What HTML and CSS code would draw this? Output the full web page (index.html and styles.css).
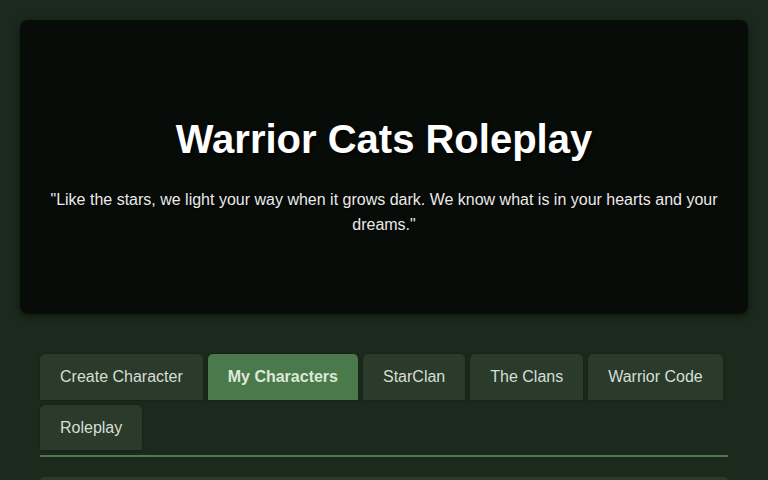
FILE: index.html
```html
<!DOCTYPE html>
<html lang="en">
<head>
<meta charset="utf-8">
<title>Warrior Cats Roleplay</title>
<link rel="stylesheet" href="styles.css">
</head>
<body>
<header class="hero">
  <h1 class="hero-title">Warrior Cats Roleplay</h1>
  <p class="hero-quote">"Like the stars, we light your way when it grows dark. We know what is in your hearts and your dreams."</p>
</header>
<main class="main">
  <nav class="tabs">
    <button class="tab">Create Character</button>
    <button class="tab tab-active">My Characters</button>
    <button class="tab">StarClan</button>
    <button class="tab">The Clans</button>
    <button class="tab">Warrior Code</button>
    <button class="tab">Roleplay</button>
  </nav>
  <section class="panel"></section>
</main>
</body>
</html>
```
FILE: styles.css
```css
html, body {
  margin: 0;
  padding: 0;
}
body {
  background: #1c2a1d;
  font-family: "Liberation Sans", Arial, sans-serif;
  color: #e8e8e8;
  padding: 20px;
  min-height: 480px;
  box-sizing: border-box;
}
.hero {
  background: #080c08;
  border-radius: 8px;
  box-shadow: 0 2px 8px rgba(0, 0, 0, 0.5);
  padding: 96px 30px 77px;
  text-align: center;
}
.hero-title {
  margin: 0 0 25px;
  font-size: 40px;
  line-height: 46px;
  font-weight: bold;
  color: #ffffff;
  text-shadow: 2px 2px 4px rgba(0, 0, 0, 0.8);
}
.hero-quote {
  margin: 0;
  font-size: 16px;
  line-height: 25px;
  color: #eaeaea;
  text-shadow: 1px 1px 2px rgba(0, 0, 0, 0.8);
}
.main {
  padding: 40px 20px 0;
}
.tabs {
  display: flex;
  flex-wrap: wrap;
  gap: 5px;
  padding-bottom: 5px;
  border-bottom: 2px solid #4f7a4f;
  margin-bottom: 20px;
}
.tab {
  font-family: "Liberation Sans", Arial, sans-serif;
  font-size: 16px;
  line-height: 17.5px;
  padding: 14px 20px;
  border: none;
  border-radius: 5px 5px 0 0;
  background: #2a3a2b;
  color: #d6dfd4;
  box-shadow: 0 0 3px rgba(0, 0, 0, 0.35);
  cursor: pointer;
}
.tab-active {
  background: #4a7a4c;
  color: #dde9d6;
  font-weight: bold;
}
.panel {
  background: #2a3a2b;
  height: 200px;
  border-radius: 4px;
}
```
